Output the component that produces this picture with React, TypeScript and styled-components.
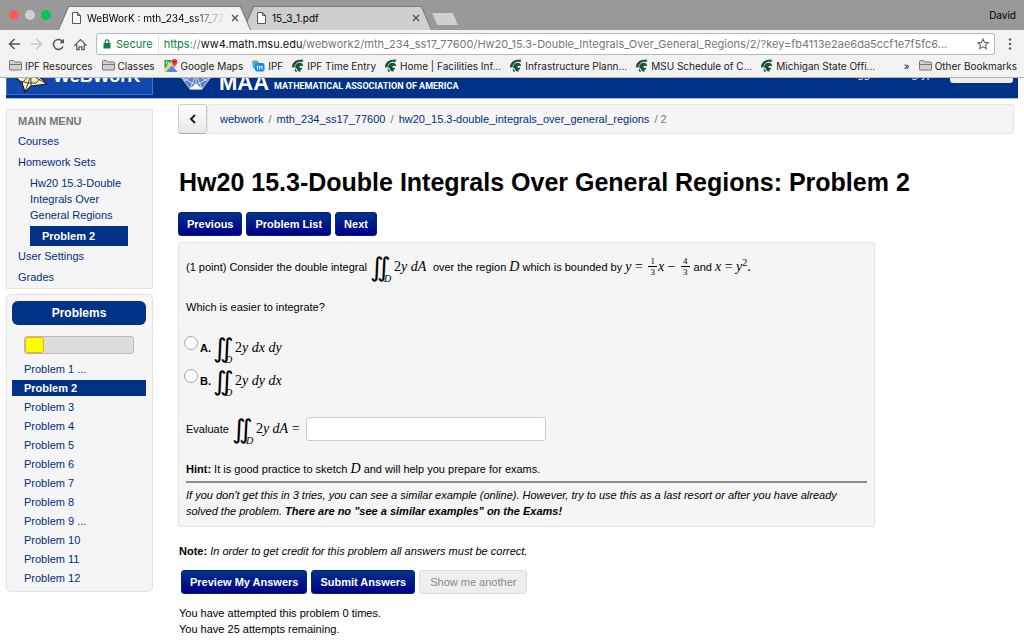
import React from "react";
import styled, { createGlobalStyle, css } from "styled-components";

const ui = `Inter, Roboto, sans-serif`;
const page = `"Liberation Sans", Arial, sans-serif`;
const math = `"Liberation Serif", "Times New Roman", serif`;
const navy = "#003388";

const Global = createGlobalStyle`
  * { box-sizing: border-box; }
  body { margin: 0; background: #fff; color: #000; font: 11px/16px ${page}; overflow: hidden; }
  a { color: #002f7d; text-decoration: none; }
  button, input { font: inherit; }
  p, h1, h2, ul { margin: 0; padding: 0; }
  ul { list-style: none; }
`;

/* ---------- browser window ---------- */
const TabStrip = styled.header`
  display: flex;
  align-items: flex-end;
  height: 30px;
  padding-right: 8px;
  background: #999;
  font: 10px/14px ${ui};
`;
const Lights = styled.div`
  display: flex;
  gap: 6px;
  align-self: center;
  width: 58px;
  padding-left: 9px;
`;
const Light = styled.span<{ $c: string }>`
  width: 10px;
  height: 10px;
  border-radius: 50%;
  background: ${(p) => p.$c};
`;
const tabShape = (s: number) => css`
  clip-path: polygon(0 100%, ${s}px 0, calc(100% - ${s}px) 0, 100% 100%);
`;
const Tab = styled.div<{ $active?: boolean }>`
  position: relative;
  display: flex;
  align-items: center;
  gap: 6px;
  width: ${(p) => (p.$active ? 193 : 189)}px;
  height: 24px;
  padding: 0 12px 0 14px;
  margin-left: ${(p) => (p.$active ? 0 : -8)}px;
  z-index: ${(p) => (p.$active ? 2 : 1)};
  background: #7c7c7c;
  ${tabShape(10)}
  &::before {
    content: "";
    position: absolute;
    inset: 1px 1px 0;
    background: ${(p) => (p.$active ? "#f2f2f2" : "#cfcfcf")};
    ${tabShape(10)}
  }
  > * { position: relative; }
`;
const TabTitle = styled.span<{ $fade?: boolean }>`
  flex: 1;
  overflow: hidden;
  white-space: nowrap;
  ${(p) => p.$fade && "mask-image: linear-gradient(90deg, #000 75%, transparent 100%);"}
`;
const IconButton = styled.button`
  display: flex;
  padding: 0;
  border: 0;
  background: none;
  color: #4f4f4f;
`;
const NewTab = styled.button`
  width: 26px;
  height: 12px;
  margin: 0 auto 5px 0;
  padding: 0;
  border: 0;
  background: #cfcfcf;
  clip-path: polygon(0 0, 80% 0, 100% 100%, 20% 100%);
`;
const Profile = styled.span`
  align-self: center;
`;
const Toolbar = styled.div`
  display: flex;
  align-items: center;
  gap: 9px;
  height: 26px;
  padding: 2px 12px 0 8px;
  background: #f2f2f2;
`;
const UrlBox = styled.div`
  display: flex;
  align-items: center;
  flex: 1;
  min-width: 0;
  height: 22px;
  padding: 0 5px 0 6px;
  border: 1px solid #b9b9b9;
  border-radius: 3px;
  background: #fff;
  font: 11px/16px ${ui};
  color: #777;
  white-space: nowrap;
`;
const Secure = styled.span`
  padding: 0 5px;
  margin-right: 5px;
  border-right: 1px solid #ddd;
  color: #0b8043;
`;
const Url = styled.span`
  flex: 1;
  overflow: hidden;
  b { font-weight: 400; color: #111; }
  i { font-style: normal; color: #0b8043; }
`;
const Bookmarks = styled.nav`
  display: flex;
  align-items: center;
  height: 22px;
  padding: 0 7px 2px 9px;
  gap: 9px;
  background: #f2f2f2;
  border-bottom: 1px solid #b3b3b3;
  font: 10px/14px ${ui};
  white-space: nowrap;
`;
const Bookmark = styled.a<{ $push?: boolean }>`
  display: flex;
  align-items: center;
  gap: 3px;
  color: #1c1c1c;
  ${(p) => p.$push && "margin-left: auto;"}
`;

/* ---------- site banner ---------- */
const Banner = styled.header`
  display: flex;
  align-items: flex-end;
  height: 21px;
  margin: 0 6px;
  overflow: hidden;
  background: ${navy};
  border-bottom: 1px solid #9db9e4;
  color: #fff;
`;
const Brand = styled.a`
  display: flex;
  align-items: flex-end;
  flex: none;
  gap: 5px;
  width: 147px;
  height: 40px;
  margin-bottom: 3px;
  padding: 0 0 1px 7px;
  background: #1148b0;
  border: 1px solid #4a72bd;
  color: #fff;
  font: bold 18px/22px ${page};
  span { padding-bottom: 6px; }
`;
const Maa = styled.div`
  display: flex;
  align-items: flex-end;
  flex: 1;
  padding: 0 0 7px 27px;
  white-space: nowrap;
  b { font: bold 22px/24px ${page}; padding-left: 7px; margin-bottom: -4px; }
  small { font: bold 9px/10px Roboto, sans-serif; padding-left: 5px; }
`;
const Session = styled.div`
  display: flex;
  align-items: flex-end;
  gap: 8px;
  padding: 0 5px 15px 0;
  white-space: nowrap;
  span { padding-bottom: 1px; }
`;
const LogOut = styled.button`
  width: 63px;
  height: 22px;
  padding: 0 0 2px;
  border: 0;
  border-radius: 3px;
  background: #ececec;
  color: #333;
`;

/* ---------- page columns ---------- */
const Columns = styled.div`
  display: flex;
  align-items: flex-start;
  gap: 25px;
  padding: 5px 10px 0 6px;
`;
const Side = styled.aside`
  flex: none;
  width: 147px;
  padding-top: 5px;
`;
const Main = styled.main`
  flex: 1;
  min-width: 0;
`;
const Menu = styled.nav`
  padding: 3px 11px 0;
  border: 1px solid #e3e3e3;
  background: #f5f5f5;
  h2 { font: bold 11px/16px ${page}; color: #777; padding-bottom: 2px; }
`;
const MenuLink = styled.a`
  display: block;
  padding: 2px 0 3px;
`;
const SubLink = styled(MenuLink)`
  padding: 2px 12px;
`;
const CurrentLink = styled.a`
  display: block;
  width: 98px;
  margin: 1px 0 0 12px;
  padding: 2px 12px;
  background: ${navy};
  color: #fff;
  font-weight: bold;
`;
const ProblemPanel = styled.nav`
  margin-top: 5px;
  padding: 6px 6px 2px 5px;
  border: 1px solid #e3e3e3;
  border-radius: 5px;
  background: #f5f5f5;
  h2 {
    border-radius: 6px;
    background: ${navy};
    color: #fff;
    text-align: center;
    font: bold 12px/24px ${page};
  }
`;
const Progress = styled.div`
  width: 110px;
  height: 18px;
  margin: 11px 0 7px 12px;
  border: 1px solid #bbb;
  border-radius: 3px;
  background: #ddd;
`;
const Done = styled.div`
  width: 19px;
  height: 16px;
  border: 1px solid #f9a825;
  border-radius: 3px;
  background: #ff0;
`;
const ProblemLink = styled.a<{ $on?: boolean }>`
  display: block;
  margin-bottom: 3px;
  padding-left: 12px;
  ${(p) => p.$on && css`background: ${navy}; color: #fff; font-weight: bold;`}
`;

/* ---------- main column ---------- */
const CrumbRow = styled.div`
  display: flex;
  height: 30px;
`;
const Back = styled.button`
  display: flex;
  align-items: center;
  justify-content: center;
  width: 29px;
  padding: 0;
  border: 1px solid #ccc;
  border-bottom-color: #aaa;
  border-radius: 3px;
  background: linear-gradient(#fff, #e6e6e6);
`;
const Crumbs = styled.nav`
  flex: 1;
  padding: 6px 12px;
  border: 1px solid #e6e6e6;
  border-radius: 3px;
  background: #f5f5f5;
  color: #777;
  a { margin-right: 2px; }
  a + a { margin-left: 2px; }
`;
const Title = styled.h1`
  padding: 32px 0 14px 1px;
  font: bold 25px/32px ${page};
  white-space: nowrap;
`;
const Row = styled.div<{ $inset?: number }>`
  display: flex;
  gap: 4px;
  padding-left: ${(p) => p.$inset ?? 0}px;
`;
const Button = styled.button<{ $quiet?: boolean }>`
  height: 24px;
  padding: 0 8px;
  border: 1px solid #00257a;
  border-radius: 3px;
  background: linear-gradient(#003388, #000088);
  color: #fff;
  font-weight: bold;
  ${(p) => p.$quiet && css`
    padding: 0 10px;
    border-color: #ddd;
    background: #eee;
    color: #888;
    font-weight: normal;
  `}
`;
const Problem = styled.section`
  width: 697px;
  max-width: 100%;
  margin: 6px 0 16px;
  padding: 7px;
  border: 1px solid #e3e3e3;
  border-radius: 3px;
  background: #f5f5f5;
`;
const Line = styled.div<{ $h: number }>`
  display: flex;
  align-items: center;
  height: ${(p) => p.$h}px;
  white-space: pre;
`;
const M = styled.span`
  font: 14px/16px ${math};
  white-space: pre;
`;
const Power = styled.sup`
  padding-bottom: 8px;
  font: 10px/10px ${math};
`;
const IntegralBox = styled.span`
  display: inline-flex;
  align-items: center;
  width: 24px;
  height: 32px;
  b {
    width: 14px;
    font: italic 200 26px/32px "DejaVu Sans", ${math};
  }
  sub {
    align-self: flex-end;
    font: italic 10px/8px ${math};
  }
`;
const Fraction = styled.span`
  display: inline-flex;
  flex-direction: column;
  margin: 0 1px 0 2px;
  font: 9px/10px ${math};
  text-align: center;
  span { padding: 0 2px; }
  span + span { border-top: 1px solid #000; }
`;
const Choice = styled.label`
  display: flex;
  align-items: center;
  height: 33px;
  white-space: pre;
  b { padding-left: 2px; }
  input {
    appearance: none;
    width: 14px;
    height: 14px;
    margin: 0 0 10px -2px;
    border: 1px solid #a9a9a9;
    border-radius: 50%;
    background: #fff;
  }
`;
const Answer = styled.input`
  width: 240px;
  height: 24px;
  margin-left: 6px;
  border: 1px solid #ccc;
  border-radius: 3px;
  background: #fff;
`;
const Rule = styled.hr`
  height: 2px;
  margin: 4px 0;
  border: 0;
  background: #8c8c8c;
`;
const Advice = styled.p`
  font-style: italic;
`;
const Notes = styled.p`
  padding: 0 0 11px 1px;
`;
const Attempts = styled.p`
  padding: 11px 0 0 1px;
`;

/* ---------- drawings ---------- */
const PageIcon = () => (
  <svg width="9" height="12" viewBox="0 0 9 12" fill="#fff" stroke="#555">
    <path d="M.5.5h5l3 3v8h-8zM5.500.5v3h3" />
  </svg>
);
const CloseIcon = () => (
  <svg width="8" height="8" viewBox="0 0 8 8" stroke="currentColor" strokeWidth="1.300">
    <path d="M1 1l6 6M7 1L1 7" />
  </svg>
);
const ArrowIcon = ({ right }: { right?: boolean }) => (
  <svg width="13" height="12" viewBox="0 0 13 12" fill="none" stroke={right ? "#c8c8c8" : "#555"} strokeWidth="1.500">
    <path d={right ? "M1 6h10.500M6.500 1l5 5-5 5" : "M12 6H1.500M6.500 1l-5 5 5 5"} />
  </svg>
);
const ReloadIcon = () => (
  <svg width="13" height="13" viewBox="0 0 13 13" fill="none" stroke="#555" strokeWidth="1.500">
    <path d="M11 8.500A5 5 0 1 1 10.400 3.300" />
    <path d="M12 .8v4.500H7.500z" fill="#555" stroke="none" />
  </svg>
);
const HomeIcon = () => (
  <svg width="13" height="13" viewBox="0 0 14 13" fill="none" stroke="#555" strokeWidth="1.300">
    <path d="M1 7.200L7 1.200l6 6h-2V12H8.500V9h-3v3H3V7.200z" />
  </svg>
);
const LockIcon = () => (
  <svg width="8" height="10" viewBox="0 0 8 10">
    <rect x=".5" y="4" width="7" height="5.500" rx=".6" fill="#0b8043" />
    <path d="M2.200 4.500V2.600a1.800 1.800 0 0 1 3.600 0v1.900" fill="none" stroke="#0b8043" strokeWidth="1.200" />
  </svg>
);
const StarIcon = () => (
  <svg width="12" height="12" viewBox="0 0 12 12" fill="none" stroke="#666" strokeWidth="1.100">
    <path d="M6 1l1.500 3.400 3.700.3-2.800 2.400.9 3.600L6 8.800l-3.300 1.900.9-3.600L.8 4.700l3.700-.3z" />
  </svg>
);
const DotsIcon = () => (
  <svg width="8" height="12" viewBox="0 0 8 12" fill="#555">
    <circle cx="6" cy="1.500" r="1.200" />
    <circle cx="6" cy="6" r="1.200" />
    <circle cx="6" cy="10.500" r="1.200" />
  </svg>
);
const FolderIcon = () => (
  <svg width="13" height="11" viewBox="0 0 13 11" fill="#d2d2d2" stroke="#777">
    <path d="M.5 9.500v-8q0-1 1-1h3l1 1.500h6q1 0 1 1v6.500q0 .5-.5.500H1q-.5 0-.5-.5zM.5 4.500h12" />
  </svg>
);
const MapsIcon = () => (
  <svg width="14" height="13" viewBox="0 0 13 13">
    <path d="M0 1h13v12H0z" fill="#e8e8e8" />
    <path d="M0 1h8L0 10z" fill="#1fa35c" />
    <path d="M0 13l7-7 6 7z" fill="#4285f4" />
    <path d="M0 11l8-8 1.500 1.500L1.500 13H0z" fill="#fbd04a" />
    <path d="M10 0a3 3 0 0 1 3 3c0 2-2.500 3-3 6-.5-3-3-4-3-6a3 3 0 0 1 3-3z" fill="#e94335" />
    <circle cx="10" cy="3" r="1" fill="#8c1f16" />
    <circle cx="3" cy="4" r="1.300" fill="none" stroke="#fff" strokeWidth=".8" />
  </svg>
);
const IpfIcon = () => (
  <svg width="13" height="12" viewBox="0 0 13 12">
    <path d="M0 1l4-1 3 2-1 8-3-1z" fill="#7cbf3f" />
    <path d="M0 1l5 1-1 8-3-2z" fill="#35b4e8" />
    <rect x="3" y="3" width="9.500" height="8.500" rx="2" fill="#1d87e4" />
    <path d="M5.500 5.500v4M7.500 9.500v-3h2.500v3" fill="none" stroke="#fff" strokeWidth="1" />
  </svg>
);
const SpartanIcon = () => (
  <svg width="12" height="13" viewBox="0 0 12 13" fill="#18533f">
    <path d="M0 9C-.2 3.500 3.500 0 11.500.5L10.300 1.700l1.400.6-1.800.6C6 2.600 3 4.500 2.200 9L1.200 8z" />
    <path d="M3 8.500C3.200 5.500 5.200 3.800 8 3.800c2 .1 3 1.400 3.200 3.400L9.600 6.800 7.800 7l-.4 1.200 1 .8 1.400-.4.4 1.600-1.400.2-.4 2.400L5.800 12l-1-2.600z" />
    <path d="M2.600 10.200L4 10l1 2.800H3.400z" />
  </svg>
);
const BookLogo = () => (
  <svg width="34" height="28" viewBox="0 0 34 28">
    <path d="M0 11l8 7 3 9 6-6 16-2-8-8-9-6-12-1z" fill="#f4efc4" stroke="#1c1c1c" strokeWidth="1.200" />
    <path d="M0 11q8 3 17-1M8 18q4-5 9-8M17 10l-6 17M17 10l0 11M17 10l16 9M7 16l7 2 8 0 5-5" fill="none" stroke="#1c1c1c" strokeWidth=".8" />
  </svg>
);
const PolyLogo = () => (
  <svg width="32" height="32" viewBox="0 0 32 32" fill="#5f82bd" stroke="#e6edf8" strokeWidth=".8">
    <path d="M16 1l12 7 3 10-9 12H10L1 18 4 8z" />
    <path d="M1 18l15-3 15 3M16 15l-6 15M16 15l6 15M4 8l12 7 12-7M16 1v14M1 18l15 8 15-8M16 15v11M4 22l12-7 11 7" fill="none" />
    <path d="M10 30l6-5 6 5z" fill="#fff" />
  </svg>
);
const ChevronIcon = () => (
  <svg width="8" height="10" viewBox="0 0 8 10" fill="none" stroke="#222" strokeWidth="2">
    <path d="M6 1L2 5l4 4" />
  </svg>
);

const Integral = () => (
  <IntegralBox>
    <b>∬</b>
    <sub>D</sub>
  </IntegralBox>
);

const spartanLinks = [
  "IPF Time Entry",
  "Home | Facilities Inf...",
  "Infrastructure Plann...",
  "MSU Schedule of C...",
  "Michigan State Offi...",
];
const problems = ["1 ...", "2", "3", "4", "5", "6", "7", "8", "9 ...", "10", "11", "12"];

export default function App() {
  return (
    <>
      <Global />
      <TabStrip>
        <Lights>
          <Light $c="#fc5b57" />
          <Light $c="#cfcfcf" />
          <Light $c="#00c853" />
        </Lights>
        <Tab $active>
          <PageIcon />
          <TabTitle $fade>WeBWorK : mth_234_ss17_77</TabTitle>
          <IconButton aria-label="Close tab"><CloseIcon /></IconButton>
        </Tab>
        <Tab>
          <PageIcon />
          <TabTitle>15_3_1.pdf</TabTitle>
          <IconButton aria-label="Close tab"><CloseIcon /></IconButton>
        </Tab>
        <NewTab aria-label="New tab" />
        <Profile>David</Profile>
      </TabStrip>
      <Toolbar>
        <IconButton aria-label="Back"><ArrowIcon /></IconButton>
        <IconButton aria-label="Forward"><ArrowIcon right /></IconButton>
        <IconButton aria-label="Reload"><ReloadIcon /></IconButton>
        <IconButton aria-label="Home"><HomeIcon /></IconButton>
        <UrlBox>
          <LockIcon />
          <Secure>Secure</Secure>
          <Url>
            <i>https</i>://<b>ww4.math.msu.edu</b>/webwork2/mth_234_ss17_77600/Hw20_15.3-Double_Integrals_Over_General_Regions/2/?key=fb4113e2ae6da5ccf1e7f5fc6...
          </Url>
          <IconButton aria-label="Bookmark this page"><StarIcon /></IconButton>
        </UrlBox>
        <IconButton aria-label="Menu"><DotsIcon /></IconButton>
      </Toolbar>
      <Bookmarks>
        <Bookmark href="#"><FolderIcon />IPF Resources</Bookmark>
        <Bookmark href="#"><FolderIcon />Classes</Bookmark>
        <Bookmark href="#"><MapsIcon />Google Maps</Bookmark>
        <Bookmark href="#"><IpfIcon />IPF</Bookmark>
        {spartanLinks.map((t) => (
          <Bookmark href="#" key={t}><SpartanIcon />{t}</Bookmark>
        ))}
        <Bookmark href="#" $push>»</Bookmark>
        <Bookmark href="#"><FolderIcon />Other Bookmarks</Bookmark>
      </Bookmarks>

      <Banner>
        <Brand href="#"><BookLogo /><span>WeBWorK</span></Brand>
        <Maa>
          <PolyLogo />
          <b>MAA</b>
          <small>MATHEMATICAL ASSOCIATION OF AMERICA</small>
        </Maa>
        <Session>
          <span>Logged in as grypd.</span>
          <LogOut>Log Out</LogOut>
        </Session>
      </Banner>

      <Columns>
        <Side>
          <Menu>
            <h2>MAIN MENU</h2>
            <MenuLink href="#">Courses</MenuLink>
            <MenuLink href="#">Homework Sets</MenuLink>
            <SubLink href="#">Hw20 15.3-Double Integrals Over General Regions</SubLink>
            <CurrentLink href="#">Problem 2</CurrentLink>
            <MenuLink href="#">User Settings</MenuLink>
            <MenuLink href="#">Grades</MenuLink>
          </Menu>
          <ProblemPanel>
            <h2>Problems</h2>
            <Progress><Done /></Progress>
            <ul>
              {problems.map((p) => (
                <li key={p}><ProblemLink href="#" $on={p === "2"}>Problem {p}</ProblemLink></li>
              ))}
            </ul>
          </ProblemPanel>
        </Side>

        <Main>
          <CrumbRow>
            <Back aria-label="Back"><ChevronIcon /></Back>
            <Crumbs>
              <a href="#">webwork</a> / <a href="#">mth_234_ss17_77600</a> / <a href="#">hw20_15.3-double_integrals_over_general_regions</a> / 2
            </Crumbs>
          </CrumbRow>
          <Title>Hw20 15.3-Double Integrals Over General Regions: Problem 2</Title>
          <Row>
            <Button>Previous</Button>
            <Button>Problem List</Button>
            <Button>Next</Button>
          </Row>

          <Problem>
            <Line $h={33}>
              (1 point) Consider the double integral <Integral />
              <M>2<i>y dA</i> </M> over the region <M><i>D</i></M> which is bounded by <M><i>y</i> = </M>
              <Fraction><span>1</span><span>3</span></Fraction>
              <M><i>x</i> − </M>
              <Fraction><span>4</span><span>3</span></Fraction> and <M><i>x</i> = <i>y</i></M>
              <Power>2</Power><M>.</M>
            </Line>
            <Line $h={48}>Which is easier to integrate?</Line>
            <Choice>
              <input type="radio" name="order" />
              <b>A.</b> <Integral /><M>2<i>y dx dy</i></M>
            </Choice>
            <Choice>
              <input type="radio" name="order" />
              <b>B.</b> <Integral /><M>2<i>y dy dx</i></M>
            </Choice>
            <Line $h={64}>
              <label htmlFor="answer">Evaluate </label>
              <Integral /><M>2<i>y dA</i> =</M>
              <Answer id="answer" />
            </Line>
            <Line $h={16}><b>Hint:</b> It is good practice to sketch <M><i>D</i></M> and will help you prepare for exams.</Line>
            <Rule />
            <Advice>
              If you don't get this in 3 tries, you can see a similar example (online). However, try to use this as a last resort or after you have already solved the problem. <b>There are no "see a similar examples" on the Exams!</b>
            </Advice>
          </Problem>

          <Notes><b>Note:</b> <i>In order to get credit for this problem all answers must be correct.</i></Notes>
          <Row $inset={3}>
            <Button>Preview My Answers</Button>
            <Button>Submit Answers</Button>
            <Button $quiet disabled>Show me another</Button>
          </Row>
          <Attempts>
            You have attempted this problem 0 times.<br />You have 25 attempts remaining.
          </Attempts>
        </Main>
      </Columns>
    </>
  );
}
